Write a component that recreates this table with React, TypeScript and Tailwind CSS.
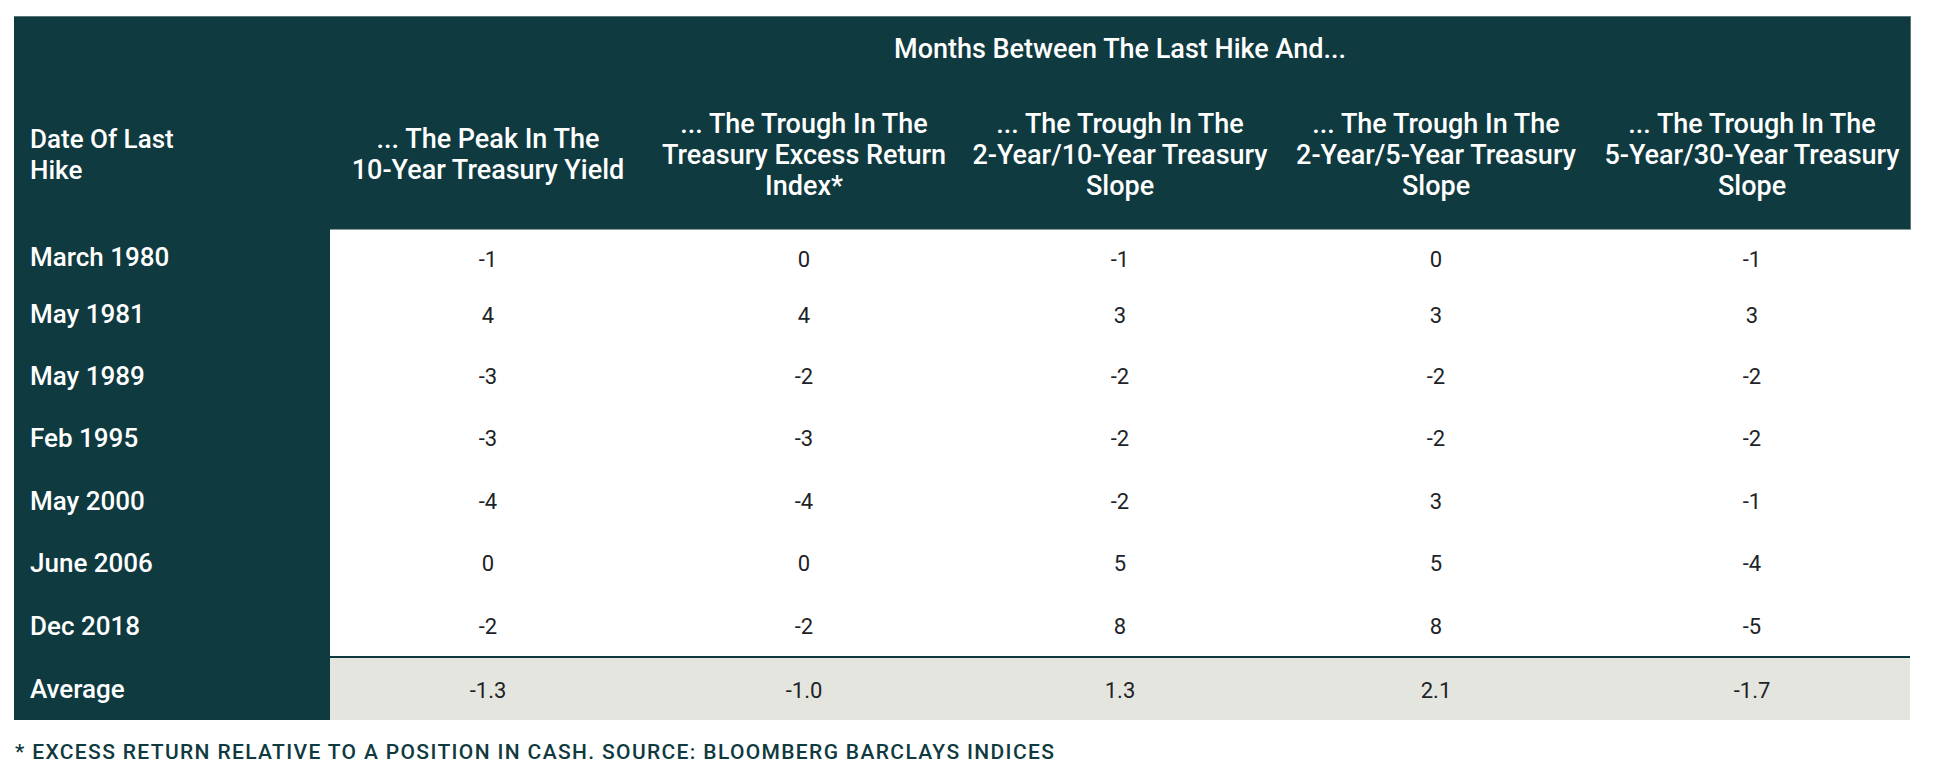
import React from "react";

const cols = [
  ["... The Peak In The", "10-Year Treasury Yield"],
  ["... The Trough In The", "Treasury Excess Return", "Index*"],
  ["... The Trough In The", "2-Year/10-Year Treasury", "Slope"],
  ["... The Trough In The", "2-Year/5-Year Treasury", "Slope"],
  ["... The Trough In The", "5-Year/30-Year Treasury", "Slope"],
];

const rows: { label: string; vals: string[]; h: string }[] = [
  { label: "March 1980", vals: ["-1", "0", "-1", "0", "-1"], h: "h-[56px]" },
  { label: "May 1981", vals: ["4", "4", "3", "3", "3"], h: "h-[58px]" },
  { label: "May 1989", vals: ["-3", "-2", "-2", "-2", "-2"], h: "h-[63px] pt-[3px]" },
  { label: "Feb 1995", vals: ["-3", "-3", "-2", "-2", "-2"], h: "h-[62px] pt-[3px]" },
  { label: "May 2000", vals: ["-4", "-4", "-2", "3", "-1"], h: "h-[63px] pt-[3px]" },
  { label: "June 2006", vals: ["0", "0", "5", "5", "-4"], h: "h-[62px] pt-[3px]" },
  { label: "Dec 2018", vals: ["-2", "-2", "8", "8", "-5"], h: "h-[63px] pt-[3px]" },
];

const avg = ["-1.3", "-1.0", "1.3", "2.1", "-1.7"];

export default function App() {
  return (
    <div
      className="bg-white w-[1944px] h-[784px] pt-4 pl-[14px]"
      style={{ fontFamily: "Roboto, 'Liberation Sans', sans-serif" }}
    >
      <div className="w-[1897px]">
        {/* Header */}
        <div className="flex bg-[#0f3a40] border-t border-r border-[#5d7579] text-white font-medium text-[27px] leading-[31px]">
          <div className="w-[316px] shrink-0 flex items-center pl-4 pt-[63px] text-[26px]">
            <div>
              Date Of Last
              <br />
              Hike
            </div>
          </div>
          <div className="flex-1 flex flex-col">
            <div className="h-[66px] flex items-center justify-center pb-[1px]">
              Months Between The Last Hike And...
            </div>
            <div className="h-[146px] flex">
              {cols.map((c, i) => (
                <div
                  key={i}
                  className="w-[316px] shrink-0 flex items-center justify-center text-center pb-[2px]"
                >
                  <div>
                    {c.map((l, j) => (
                      <div key={j}>{l}</div>
                    ))}
                  </div>
                </div>
              ))}
            </div>
          </div>
        </div>
        {/* Body */}
        {rows.map((r, i) => (
          <div key={r.label} className={`flex ${r.h} bg-[#0f3a40]`}>
            <div className="w-[316px] shrink-0 text-white font-medium text-[26px] flex items-center pl-4">
              {r.label}
            </div>
            <div
              className={`flex-1 flex bg-white -mt-[3px] pt-[3px] ${i === 0 ? "mt-0 pt-0 border-t border-[#8a9b9e]" : ""} ${i === 1 ? "mt-0 pt-0" : ""}`}
            >
              {r.vals.map((v, j) => (
                <div
                  key={j}
                  className="w-[316px] shrink-0 flex items-center justify-center text-[22px] text-[#1d2326]"
                >
                  {v}
                </div>
              ))}
            </div>
          </div>
        ))}
        <div className="flex h-[64px]">
          <div className="w-[316px] shrink-0 bg-[#0f3a40] text-white font-medium text-[26px] flex items-center pl-4 pt-[3px]">
            Average
          </div>
          <div className="flex-1 flex bg-[#e5e5e0] border-t-2 border-[#10393f] mr-px pt-[3px]">
            {avg.map((v, j) => (
              <div
                key={j}
                className="w-[316px] shrink-0 flex items-center justify-center text-[22px] text-[#1d2326]"
              >
                {v}
              </div>
            ))}
          </div>
        </div>
      </div>
      <div className="mt-[22px] pl-px text-[21px] tracking-[1.35px] font-medium text-[#0f3a40] leading-none">
        * EXCESS RETURN RELATIVE TO A POSITION IN CASH. SOURCE: BLOOMBERG BARCLAYS INDICES
      </div>
    </div>
  );
}
